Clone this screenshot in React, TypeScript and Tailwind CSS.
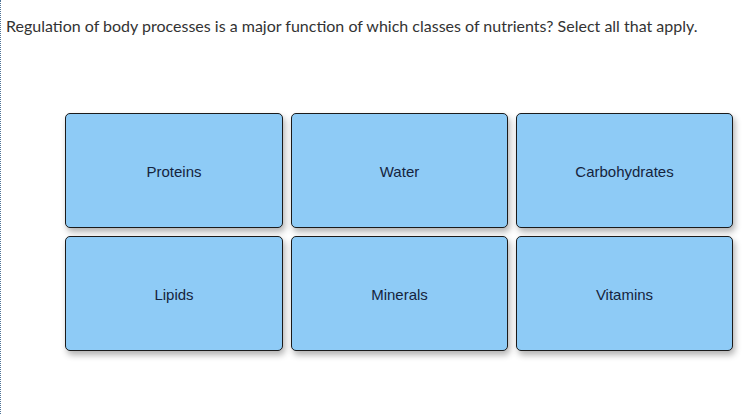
const OPTIONS = ['Proteins', 'Water', 'Carbohydrates', 'Lipids', 'Minerals', 'Vitamins']

export default function App() {
  return (
    <div className="w-[755px] h-[414px] bg-white border-l border-dotted border-[#4f7396] overflow-hidden">
      <p
        className="pl-[5px] pt-[16px] text-[16px] leading-[20px] text-[#333]"
        style={{ fontFamily: 'Lato, "Open Sans", sans-serif' }}
      >
        Regulation of body processes is a major function of which classes of nutrients? Select all that apply.
      </p>

      <div className="ml-[64px] mt-[77px] grid grid-cols-[218px_217px_217px] gap-x-[8px] gap-y-[8px] w-[668px]">
        {OPTIONS.map((label) => (
          <div
            key={label}
            className="h-[115px] pt-[4px] flex items-center justify-center bg-[#8ecbf6] border border-[#1b1b1b] rounded-[5px] shadow-[2px_4px_6px_rgba(0,0,0,0.3)] text-[15px] text-[#15243d]"
            style={{ fontFamily: '"Liberation Sans", Arial, sans-serif' }}
          >
            {label}
          </div>
        ))}
      </div>
    </div>
  )
}
